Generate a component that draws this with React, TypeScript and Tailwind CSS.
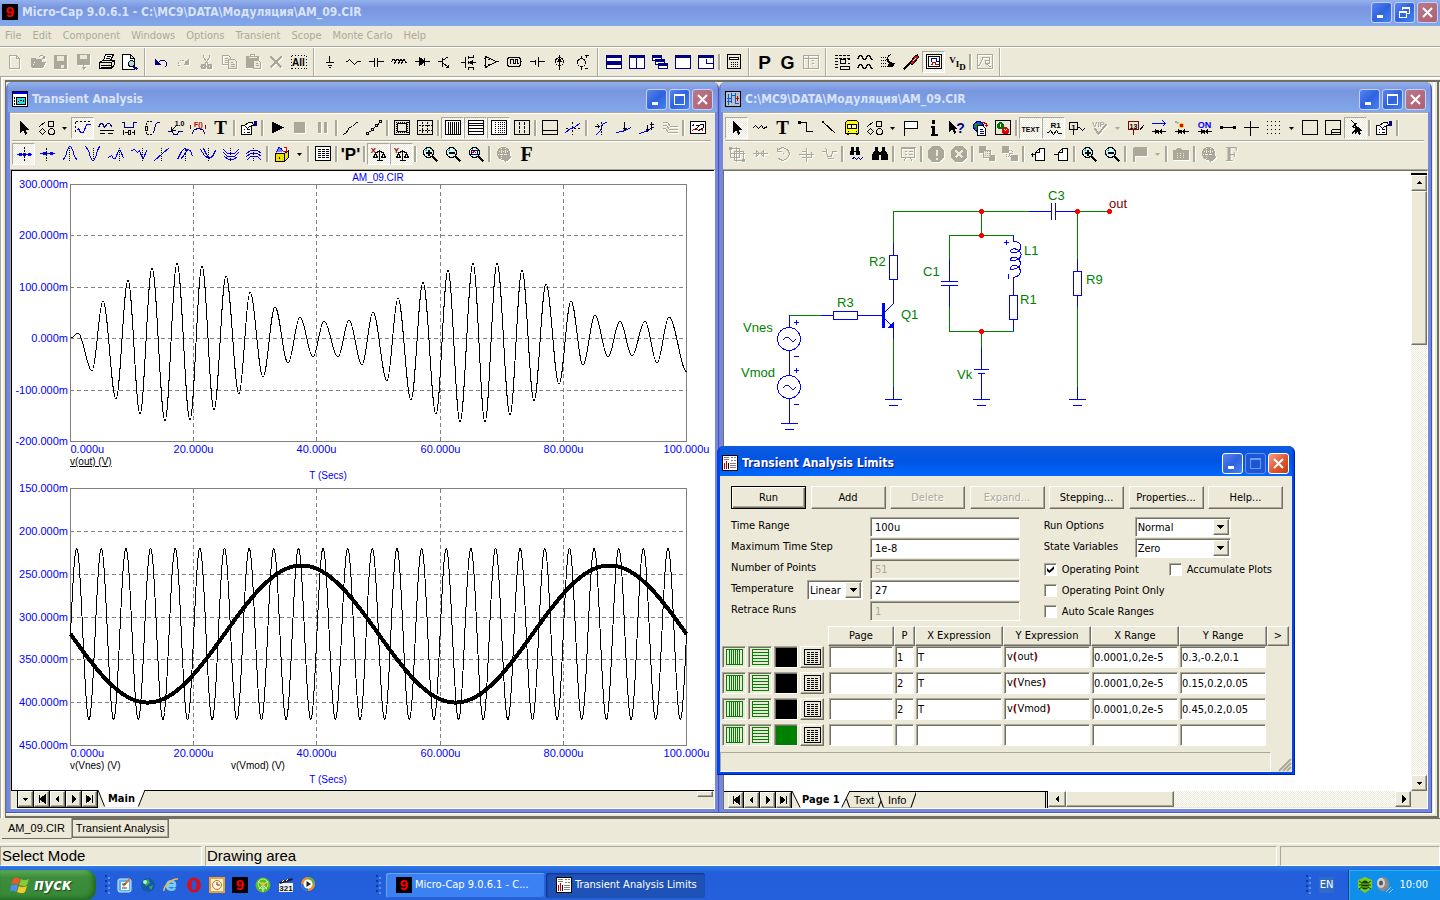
import type { ReactNode } from 'react';
import clsx from 'clsx';

const UI = 'font-["DejaVu_Sans_Condensed","Liberation_Sans",sans-serif]';
const RAISED = 'border border-t-white border-l-white border-r-[#716f64] border-b-[#716f64] shadow-[inset_-1px_-1px_#aca899] bg-[#ece9d8]';
const SUNKEN = 'border border-t-[#aca899] border-l-[#aca899] border-r-white border-b-white shadow-[inset_1px_1px_#716f64]';
const HATCH = 'bg-[repeating-conic-gradient(#ffffff_0_25%,#ece9d8_0_50%)] bg-[length:2px_2px]';

const FACE = '#ece9d8';
const BLUE = '#0000ff';
const NAVY = '#000080';

const circ = (x: number, y: number, r: number) =>
  `M${x - r} ${y}a${r} ${r} 0 1 0 ${2 * r} 0a${r} ${r} 0 1 0 ${-2 * r} 0`;

function L({ d, c = 'currentColor', f = 'none', w = 1, dash }: { d: string; c?: string; f?: string; w?: number; dash?: string }) {
  return <path d={d} stroke={c} fill={f} strokeWidth={w} strokeDasharray={dash} />;
}

function T({ x = 8, y, s, c = 'currentColor', serif, children }: { x?: number; y: number; s: number; c?: string; serif?: boolean; children: string }) {
  return (
    <text x={x} y={y} fontSize={s} fill={c} stroke="none" fontWeight="bold" textAnchor="middle" fontFamily={serif ? 'Liberation Serif, serif' : 'Liberation Sans, sans-serif'}>
      {children}
    </text>
  );
}

const shapes = <><L d="M0 6L6 1" /><L d="M9 1H14V6H9Z" /><L d="M3 8L6 11L3 14L0 11Z" /><L d={circ(12, 11, 3)} /></>;
const pageProps = <><L d="M0 5H10V14H0Z" f="#fff" /><L d="M2 9H3M5 9H8M2 12H3M5 12H8" /><L d="M3 5L7 2L11 2L12 5L8 6L6 8Z" f="#fff" /><L d="M13 1H15V5H13Z" c={NAVY} f={NAVY} /></>;
const lens = <><L d={circ(6, 6, 5)} f="#d8f4f4" /><L d="M4 3L3 5M9 3L8 4" c="#00c8d0" /><L d="M10 10L15 15" w={2} /></>;
const globe = <><L d={circ(7, 7, 6)} f="#aca899" /><L d="M2 5H12M1 8H13M5 1V13M9 1V13" c={FACE} dash="1 1" /><L d="M6 12L13 8L14 11L9 15Z" f="#aca899" /></>;
const vlines = (n: number[]) => n.map((x) => `M${x} 1V14`).join('');
const source = <><L d="M0 11H14M7 9V13" /><L d="M4 9L7 11L4 13ZM10 9L8 11L10 13Z" f="currentColor" /></>;

const icons: Record<string, ReactNode> = {
  New: <L d="M2 1H9L12 4V14H2ZM9 1V4H12" />,
  Open: <><L d="M1 4H5L6 5H11V7H4L1 12Z" f="currentColor" /><L d="M5 8H15L12 13H2Z" f="currentColor" /><L d="M8 3L10 1H12L14 4M14 1V4H11" /></>,
  Save: <><L d="M1 1H13V14H1Z" f="currentColor" /><L d="M4 2H10V6H4Z" c={FACE} f={FACE} /><L d="M8 11H10V13H8Z" c={FACE} f={FACE} /></>,
  'Save As': <><L d="M1 0H13V10H1Z" f="currentColor" /><L d="M4 1H10V4H4Z" c={FACE} f={FACE} /><L d="M7 10V15M5 13H9M6 14H8" /></>,
  Print: <><L d="M4 6L6 0H14L11 6" f="#fff" /><L d="M7 2H11M6 4H10" /><L d="M0 8L3 6H15V10L12 14H0Z" f={FACE} /><L d="M0 8H12V14M12 8L15 6M1 11H11" /><L d="M1 13H11" w={2} /><L d="M8 10H10" c="#ffe800" /></>,
  Preview: <><L d="M0 0H8L12 4V15H0ZM8 0V4H12" f="#fff" /><L d={circ(9, 9, 3)} f="#a8dce0" /><L d="M11 12L15 15" c={NAVY} w={2} /></>,
  Undo: <><L d="M2 5V10H7Z" c={NAVY} f={NAVY} /><L d="M5 8L7 6H11L13 8V11L11 13" c={NAVY} /></>,
  Redo: <><L d="M12 5V10H8Z" f="currentColor" /><L d="M10 8L8 6H4L2 8V11L4 12" dash="2 1" /></>,
  Cut: <><L d="M4 0V3L9 10M10 0V3L5 10" /><L d={circ(4, 12, 2)} w={2} /><L d={circ(10, 12, 2)} w={2} /></>,
  Copy: <><L d="M0 1H6L8 3V10H0ZM2 4H5M2 6H6M2 8H6" /><L d="M6 5H12L14 7V14H6Z" f={FACE} /><L d="M8 8H10M8 10H12M8 12H12" /></>,
  Paste: <><L d="M1 2H13V13H1Z" f="currentColor" /><L d="M5 0H9V3H5Z" /><L d="M3 3H11" c={FACE} /><L d="M8 6H13L15 8V14H8Z" f={FACE} /><L d="M10 9H12M10 11H13" /></>,
  Delete: <L d="M2 2L13 13M13 2L2 13" w={2} />,
  'Select All': <><L d="M0 1H15M0 14H15M0 1V14M15 1V14" dash="1 2" /><T x={7} y={11} s={10}>All</T></>,
  Ground: <L d="M7 1V8M3 8H11M5 11H9M6 13H8" />,
  Resistor: <L d="M0 7H2L4 5L9 10L12 7H15" />,
  Capacitor: <L d="M0 7H6M6 3V12M9 3V12M9 7H15" />,
  Inductor: <L d="M0 8L1 5H3L4 8L3 9L5 5H7L8 8L7 9L9 5H10L11 8L10 9L12 5H13L14 8H15" />,
  Diode: <><L d="M0 7H15M10 3V11" /><L d="M5 3L10 7L5 11Z" f="currentColor" /></>,
  'NPN Transistor': <L d="M0 7H5M5 3V12M5 6L11 2M5 8L11 13M11 10V13H8" />,
  'DNMOS Transistor': <><L d="M0 8H5M5 2V13M8 1V4M8 6V9M8 12V15M8 3H13V0M8 13H13V15M8 8H15" /><L d="M9 8L12 6V10Z" f="currentColor" /></>,
  Opamp: <L d="M2 2V13L13 7ZM0 4H2M0 11H2M13 7H15M4 5H6M4 10H6" />,
  'Pulse Source': <><L d="M2 3H13L14 5V10L13 12H2L1 10V5ZM0 7H1M14 7H15" /><L d="M3 9H4V5H7V9H9V5H11V9H12" /></>,
  Battery: <L d="M0 7H6M6 5V10M9 2V12M9 7H15" />,
  'Current Source': <><L d={circ(7, 7, 4)} /><L d="M7 0V15" /><L d="M5 7L7 4L9 7Z" f="currentColor" /></>,
  'Voltage Source': <><L d={circ(6, 8, 4)} /><L d="M6 1V4M6 12V15M9 1H13M11 0V3M9 14H12" /></>,
  'Tile Horizontal': <><L d="M0 1H15V7H0ZM0 8H15V14H0Z" c={NAVY} f="#fff" /><L d="M0 2H15M0 9H15" c={NAVY} w={3} /></>,
  'Tile Vertical': <><L d="M0 1H7V14H0ZM7 1H15V14H7Z" c={NAVY} f="#fff" /><L d="M0 2H15" c={NAVY} w={3} /></>,
  Cascade: <><L d="M0 1H9V6H0ZM3 5H12V10H3ZM6 9H15V14H6Z" c={NAVY} f="#fff" /><L d="M0 2H9M3 6H12M6 10H15" c={NAVY} w={3} /></>,
  Maximize: <><L d="M0 1H15V14H0Z" c={NAVY} f="#fff" /><L d="M0 2H15" c={NAVY} w={3} /></>,
  Overlap: <><L d="M0 1H15V14H0Z" c={NAVY} f="#fff" /><L d="M0 2H15" c={NAVY} w={3} /><L d="M8 4V9H15" c={NAVY} /></>,
  Calculator: <><L d="M1 0H14V14H1Z" /><L d="M3 3H12V5H3Z" f="#fff" /><L d="M4 8H12M4 10H12M4 12H12" dash="1 1" /></>,
  P: <T x={7} y={14} s={19}>P</T>,
  G: <T x={7} y={14} s={18}>G</T>,
  Panels: <L d="M0 1H15V14H0ZM0 4H15M5 1V14M8 6H10M8 9H10" />,
  Bill: <><L d="M0 1H15M0 4H15M0 7H3M0 10H3M0 13H3" dash="3 1" /><L d="M6 5H11V9H6ZM13 5H15M13 9H15M6 12H15V15H6Z" /></>,
  Waveforms: <L d="M0 5L2 1H4L6 5H8L10 1H12L14 5H15M0 14L2 10H4L6 14H8L10 10H12L14 14H15" />,
  Optimizer: <><L d="M0 3H5M0 6H5M0 9H5M0 12H5" dash="1 1" /><L d="M8 1L11 0M8 1L7 4L9 8L14 9L12 12L7 12L9 9L6 5" f="currentColor" /></>,
  Probe: <><L d="M0 15L7 8" w={2} /><L d="M6 9L11 2L14 0L15 3L9 10Z" f="#d01010" /><L d="M9 7L12 4" c="#fff" /></>,
  Scope: <><L d="M0 0H15V14H0Z" /><L d="M2 2H13V12H2Z" f="#fff" /><L d="M4 7H5V4H10V7H12" c={NAVY} /><L d="M4 10H6V8H9V10H12" c="#c00000" /></>,
  VIP: <><T x={3} y={8} s={9} serif>V</T><T x={8} y={12} s={9} serif>I</T><T x={13} y={15} s={9} serif>D</T></>,
  Thumbnail: <><L d="M0 0H15V14H0Z" /><L d="M1 12L5 5V3H12V9H8V6H11M8 9L14 13" /></>,
  Pointer: <L d="M4 1V12L7 9L9 14L10 13L9 9H12Z" f="currentColor" />,
  'Graphic Shapes': shapes,
  'Scope Cursor': <><L d="M0 1H14M0 1V13" dash="2 2" /><L d="M1 10L3 8L5 12L8 12L11 4L15 4" c={BLUE} /></>,
  Peaks: <><L d="M0 7L2 3L4 3L6 7L9 3L11 3L14 7" c={NAVY} /><L d="M1 10H15M1 13H6M9 13H14" /></>,
  'Horizontal Tag': <><L d="M0 2H3V7H12V2H15" c={NAVY} /><L d="M2 9V14M13 9V14M3 12H6M10 12H12" /><L d="M7 10H9V14H7Z" /></>,
  'Vertical Tag': <><L d="M2 1H7M2 14H7M2 2V5M2 11V13" dash="2 1" /><L d="M9 13L11 4L13 2H15" c={NAVY} /><L d="M1 6H3V10H1Z" /></>,
  'Point Tag': <><L d="M0 11H5L6 14H10L11 11H15" c={NAVY} /><L d="M4 10L9 5M4 6V10H8" /><T x={12} y={5} s={7}>1.0</T></>,
  'Performance Tag': <><L d="M0 4V8M15 4V8" c="#800000" /><L d="M1 14L4 9L8 8L12 9L15 14" c={NAVY} /><T x={8} y={6} s={7} c="#c00000">F()</T></>,
  Text: <T x={7} y={13} s={19} serif>T</T>,
  Properties: pageProps,
  Run: <L d="M3 2L13 7L3 12Z" f="currentColor" />,
  Stop: <L d="M2 2H12V12H2Z" f="currentColor" />,
  Pause: <L d="M3 2H5V12H3ZM9 2H11V12H9Z" f="currentColor" />,
  Smooth: <L d="M0 14L3 12L6 7L9 6L12 3L15 1" />,
  'Data Points': <L d="M2 12L5 10M7 8L9 6M11 5L13 2M0 12H2V14H0ZM5 8H7V10H5ZM9 4H11V6H9ZM13 0H15V2H13Z" />,
  Ruler: <><L d="M0 0H15V14H0Z" /><L d="M3 3H12V11H3Z" /><L d="M1 2H14M1 12H14M2 1V14M13 1V14" dash="1 1" /></>,
  Grid: <><L d="M0 0H15V14H0Z" /><L d="M5 1V14M10 1V14M1 5H14M1 10H14" dash="2 1" /></>,
  'X Grid': <><L d="M0 0H15V14H0Z" f="#fff" /><L d={vlines([3, 5, 7, 9, 11, 13])} /></>,
  'Y Grid': <><L d="M0 0H15V14H0Z" f="#fff" /><L d="M0 3H15M0 5H15M0 8H15M0 11H15" /></>,
  'Minor Log Grid': <><L d="M0 0H15V14H0Z" f="#fff" /><L d={vlines([4, 7, 9, 11, 13])} dash="1 1" /></>,
  'Minor Grid': <><L d="M0 0H15V14H0Z" /><L d={vlines([5, 10])} dash="3 1" /></>,
  Baseline: <L d="M0 0H15V14H0ZM0 10H15" />,
  'Horizontal Cursor': <><L d="M0 8H15M7 1V14" dash="2 2" /><L d="M0 12L5 8L9 7L15 2" c={BLUE} /></>,
  'Cursor Left': <><L d="M2 15L7 10L9 4L14 1" c={BLUE} /><L d="M1 6H6M4 4L6 6L4 8" /><L d="M8 1V14" dash="2 1" /></>,
  'Cursor Down': <><L d="M0 12L6 11L10 9L15 7" c={BLUE} /><L d="M8 1V10M6 8H10M7 9H9" /></>,
  'Cursor Both': <><L d="M0 13L6 11L10 9L15 6" c={BLUE} /><L d="M8 4V11M6 9H10M12 1V9M10 4H14" /></>,
  'Track Curves': <L d="M0 2H5L8 6H15M0 5H4L7 9H15M0 8H3L6 12H15" />,
  'Plot Scope': <><L d="M0 1H15V13H0Z" f="#fff" /><L d="M2 10L5 8L8 10L11 9L13 10" c="#d00000" /><L d="M4 10L10 4L13 4L13 7L8 10M5 5L9 5" /><L d="M2 5L4 4" c={BLUE} /></>,
  'Next Data Point': <><L d="M0 8H15" c={BLUE} /><L d="M3 7H5V9H3ZM7 7H9V9H7ZM12 7H14V9H12Z" c={BLUE} f={BLUE} /><L d="M8 0V15" dash="2 1" /></>,
  'Next Interpolated': <><L d="M0 7H15" c={BLUE} /><L d="M4 6H6V8H4ZM11 6H13V8H11Z" c={BLUE} f={BLUE} /><L d="M7 1V14" dash="2 1" /></>,
  Peak: <><L d="M0 14L3 10L5 3L7 0H8L10 3L12 10L15 14" c={BLUE} /><L d="M7 1V14" dash="1 1" /></>,
  Valley: <><L d="M0 0L3 4L5 11L7 14H8L10 11L12 4L14 0" c={BLUE} /><L d="M8 1V14" dash="1 1" /></>,
  High: <><L d="M0 11L3 9L5 12L7 12L10 4L12 4L15 12" c={BLUE} /><L d="M11 1V14" dash="1 1" /></>,
  Low: <><L d="M0 4L3 3L6 6L8 4L11 12L12 12L15 4" c={BLUE} /><L d="M11 1V14" dash="1 1" /></>,
  Inflection: <><L d="M0 14L15 1" c={BLUE} /><L d="M7 1V14" dash="1 1" /></>,
  'Global High': <><L d="M0 13L4 5L7 2L11 4M3 13L7 8L10 3L13 4L15 10" c={BLUE} /><L d="M8 1V14" dash="1 1" /></>,
  'Global Low': <><L d="M0 3L4 9L8 12L12 10M3 2L6 8L9 12L12 10L15 4" c={BLUE} /><L d="M8 1V14" dash="1 1" /></>,
  Bottom: <><L d="M0 3L4 7H11L15 3M0 6L4 10H11L15 6M1 10L5 13H10L14 10" c={BLUE} /><L d="M7 1V14" dash="1 1" /></>,
  Top: <><L d="M0 7L4 4H11L15 7M0 10L4 7H11L15 10M0 14L4 10H11L15 14" c={BLUE} /><L d="M7 1V14" dash="1 1" /></>,
  'Go To Branch': <><L d="M1 7H10L14 4V11L10 15H1Z" f="#f0e000" /><L d="M10 7V15M10 7L14 4M5 10V12" /><L d="M2 6L4 1L7 2L8 5" c={BLUE} f="#8080ff" /><L d="M9 1H12V5H8" c="#e00000" f="#fff" /></>,
  'Numeric Output': <><L d="M0 0H15V14H0Z" f="#fff" /><L d="M2 3H13M2 5H13M2 7H13M2 9H13M2 11H13" dash="3 1" /></>,
  'Probe P': <T x={7} y={13} s={17}>'P'</T>,
  'Normalize X': <><L d="M8 3V13M4 7L8 4L12 7M2 11H6L4 7ZM10 11H14L12 7ZM5 14H11" /><T x={2} y={6} s={8} c="#a00000">X</T></>,
  'Normalize Y': <><L d="M8 3V13M4 7L8 4L12 7M2 11H6L4 7ZM10 11H14L12 7ZM5 14H11" /><T x={2} y={6} s={8} c="#a00000">Y</T></>,
  'Zoom In': <>{lens}<L d="M3 6H9M6 3V9" w={2} /></>,
  'Zoom Out': <>{lens}<L d="M3 6H9" w={2} /></>,
  'Zoom Auto': <>{lens}<L d="M3 4H9V8H3Z" c={NAVY} f="#fff" /><L d="M4 6L6 5L8 7" c="#e00000" /></>,
  Color: globe,
  Font: <T x={7} y={14} s={20} serif>F</T>,
  Component: <L d="M0 8L3 5L6 8L9 5L11 8L15 6" />,
  Wire: <><L d="M2 2H8V11H14" /><L d="M0 1H2V3H0Z" f="currentColor" /></>,
  'Diagonal Wire': <><L d="M2 2L14 13" /><L d="M1 1H2V2H1Z" f="currentColor" /></>,
  Bus: <><L d="M1 2L3 0H12L14 2V13H1Z" f="#ffff00" /><L d="M3 4H12V8H3ZM7 4V8" f="#ffffc0" /><L d="M3 11H4M11 11H12M2 14H4M11 14H13" /></>,
  Flag: <L d="M1 15V1H14V8H1" f="#fff" />,
  Info: <><L d="M6 0H8V3H6Z" f="currentColor" /><L d="M4 6H8M4 14H11" w={2} /><L d="M7 6V14" w={3} /></>,
  Help: <><L d="M0 1V11L3 8L5 13L6 12L5 8H7Z" f="currentColor" /><T x={11} y={12} s={14} c={NAVY}>?</T></>,
  'Link Files': <><L d={circ(6, 6, 5)} c={NAVY} f="#2050d0" /><L d="M3 4H7V8H4Z" c="#00a000" f="#00a000" /><L d="M5 5H10L13 8V15H5Z" f="#fff" /><L d="M7 9H10M7 11H11M7 13H11" c={NAVY} /><L d="M10 2L14 3V6M12 5H15" c="#c00000" /></>,
  'Enable Regions': <><L d="M0 0H15V14H0Z" /><L d={circ(5, 5, 3)} c="#007000" f="#007000" /><L d={circ(10, 10, 3)} c="#e00000" f="#e00000" /><L d="M5 3V6M9 9L11 11M11 9L9 11" c="#fff" /></>,
  'Grid Text': <T x={7} y={11} s={7}>TEXT</T>,
  'Attribute Text': <><T x={9} y={7} s={8}>R1</T><L d="M0 12H2L4 10L7 14L10 10L12 13H15" /></>,
  'Node Numbers': <><L d="M0 2H8V9H0ZM4 9V14M8 7H10L13 10L15 8" /><T x={4} y={9} s={8}>1</T></>,
  'Node Voltages': <><T x={6} y={6} s={8}>VIP</T><L d="M2 8L6 13L14 4" w={2} /></>,
  Currents: <><L d="M0 1H10V9H0Z" c="#800000" /><L d="M5 9V14" c="#800000" /><L d="M11 10L15 5" /><T x={5} y={8} s={7}>13</T></>,
  'Current Arrows': <><L d="M0 3H14M11 0L14 3L11 6" c={BLUE} />{source}</>,
  Power: <><L d="M1 1L4 3" c="#aca899" w={2} /><L d={circ(7, 5, 2)} c="#e0d000" f="#f00000" />{source}</>,
  Condition: <><T x={7} y={7} s={9} c={BLUE}>ON</T>{source}</>,
  'Pin Connections': <><L d="M0 7H15" /><L d="M0 6H2V8H0ZM13 6H15V8H13Z" f="currentColor" /></>,
  'Cross-hair': <L d="M7 0V15M0 7H15" />,
  Dots: <L d="M0 1H16M0 5H16M0 9H16M0 13H16" dash="1 3" />,
  Border: <L d="M0 0H15V14H0Z" />,
  'Title Block': <L d="M0 0H15V14H0ZM6 9H15M6 9V14M6 12H15" />,
  'Select Region': <><L d="M3 0L6 3H8L4 6L8 8L3 14" /><L d="M7 5V13L9 11L11 14L12 13L10 10H13Z" f="currentColor" /></>,
  'Select Group': <><L d="M1 2H10V11H1ZM5 5H14V14H5ZM0 7H15M7 0V15" /><L d="M0 1H2V3H0ZM13 13H15V15H13Z" f="currentColor" /></>,
  Mirror: <L d="M0 7H15M4 4L7 7L4 10ZM11 4L8 7L11 10Z" />,
  Rotate: <><L d="M3 3L7 1L12 3L14 7L12 12L7 14L3 12" /><L d="M2 1V5H6M7 7H8" /></>,
  'Flip X': <L d="M0 8H15M8 1V15M3 5H7M3 11H13V5" />,
  'Flip Y': <L d="M0 5H5L6 10H10L11 5H15M4 2L6 5M6 12H12" />,
  'Find Component': <><L d="M2 1H4V4H2ZM7 1H9V4H7Z" f="currentColor" /><L d="M1 5H4V8H1ZM7 5H10V8H7ZM4 5H7" f="currentColor" /><L d="M3 12L5 11L7 13L9 11L11 13L13 11" c={NAVY} /></>,
  Find: <><L d="M3 1H5V4H3ZM10 1H12V4H10Z" f="currentColor" /><L d="M0 8L2 5H6V13H0ZM9 5H13L15 8V13H9ZM6 6H9V8H6Z" f="currentColor" /></>,
  Repeat: <L d="M0 1H15M1 2H14V11H1ZM4 5H6M8 5H12M4 8H6M8 8H12M5 12L3 15M10 12L12 15" />,
  'Error Mark': <><L d="M4 0H11L15 4V11L11 15H4L0 11V4Z" f="currentColor" /><L d="M8 3V9M8 11V13" c={FACE} w={2} /></>,
  'Clear Mark': <><L d="M4 0H11L15 4V11L11 15H4L0 11V4Z" f="currentColor" /><L d="M4 4L11 11M11 4L4 11" c={FACE} w={2} /></>,
  'Bring To Front': <><L d="M0 0H6V6H0ZM10 9H15V14H10Z" f="currentColor" /><L d="M4 4H11V11H4Z" f={FACE} /><L d="M5 5H10M5 7H10M5 9H10" dash="1 1" /></>,
  'Send To Back': <><L d="M0 0H6V6H0ZM9 9H15V14H9Z" f="currentColor" /><L d="M4 4H10V10H4Z" f="none" dash="1 1" /><L d="M6 7H9M7 6V9" /></>,
  'Add Page': <><L d="M9 2H14V14H5V6Z" f="#fff" /><L d="M9 2V6H5M0 8H4M2 6V10" /></>,
  'Delete Page': <><L d="M9 2H14V14H5V6Z" f="#fff" /><L d="M9 2V6H5M0 8H4" /></>,
  'Add Flag': <><L d="M1 1V15" w={2} /><L d="M2 1H14V9H2Z" f="currentColor" /></>,
  'Use Picture': <><L d="M0 4H3L4 2H7L8 4H15V13H0Z" f="currentColor" /><L d="M3 7H12M3 9H12M3 11H12" c={FACE} dash="1 2" /></>,
};

function Icon({ name }: { name: string }) {
  return (
    <svg width="16" height="16" viewBox="0 0 16 16" fill="none" shapeRendering="crispEdges" className="block shrink-0 overflow-visible">
      <g transform="translate(.5 .5)">{icons[name]}</g>
    </svg>
  );
}

// '|' small divider, '||' band divider, 'v' drop arrow, '*' pressed, '-' disabled
function Toolbar({ items }: { items: string[] }) {
  return (
    <div className="flex h-[22px] items-center">
      {items.map((item, i) => {
        if (item === '|') return <span key={i} className="mx-px h-4 w-[3px] shrink-0 border-l-2 border-l-[#aca899] border-r border-r-white" />;
        if (item === '||') return <span key={i} className="mx-[3px] h-7 w-0.5 shrink-0 border-l border-l-[#aca899] border-r border-r-white" />;
        if (item === 'v' || item === '-v')
          return (
            <button key={i} aria-label="More" className={clsx('flex h-[22px] w-[13px] shrink-0 items-center justify-center', item === '-v' ? 'text-[#aca899]' : 'text-black')}>
              <svg width="5" height="3" viewBox="0 0 5 3"><path d="M0 0H5L2.5 3Z" fill="currentColor" /></svg>
            </button>
          );
        const pressed = item[0] === '*';
        const disabled = item[0] === '-';
        const name = pressed || disabled ? item.slice(1) : item;
        return (
          <button
            key={i}
            aria-label={name}
            disabled={disabled}
            className={clsx(
              'flex h-[22px] w-[23px] shrink-0 items-center justify-center',
              disabled ? 'text-[#aca899] drop-shadow-[1px_1px_0_#fff]' : 'text-black',
              pressed && `border border-t-[#aca899] border-l-[#aca899] border-r-white border-b-white ${HATCH}`,
            )}
          >
            <Icon name={name} />
          </button>
        );
      })}
    </div>
  );
}

const mainBar = [
  '-New', '-Open', '-Save', '-Save As', 'Print', 'Preview', '||',
  'Undo', '-Redo', '-Cut', '-Copy', '-Paste', '-Delete', 'Select All', '||',
  'Ground', 'Resistor', 'Capacitor', 'Inductor', 'Diode', 'NPN Transistor', 'DNMOS Transistor', 'Opamp', 'Pulse Source', 'Battery', 'Current Source', 'Voltage Source', '||',
  'Tile Horizontal', 'Tile Vertical', 'Cascade', 'Maximize', 'Overlap', '|', 'Calculator', '||',
  'P', 'G', '-Panels', '||',
  'Bill', 'Waveforms', 'Optimizer', 'Probe', '*Scope', 'VIP', '|', '-Thumbnail', '||',
];

const plotBar1 = [
  'Pointer', 'Graphic Shapes', 'v', '*Scope Cursor', 'Peaks', 'Horizontal Tag', 'Vertical Tag', 'Point Tag', 'Performance Tag', 'Text', '|',
  'Properties', '|', 'Run', '-Stop', '-Pause', '|', 'Smooth', 'Data Points', '|', 'Ruler', 'Grid', '|',
  '*X Grid', '*Y Grid', '*Minor Log Grid', 'Minor Grid', '|', 'Baseline', 'Horizontal Cursor', '|',
  'Cursor Left', 'Cursor Down', 'Cursor Both', '-Track Curves', '|', 'Plot Scope',
];

const plotBar2 = [
  '*Next Data Point', 'Next Interpolated', 'Peak', 'Valley', 'High', 'Low', 'Inflection', 'Global High', 'Global Low', 'Bottom', 'Top', '|',
  'Go To Branch', 'v', '|', 'Numeric Output', '|', 'Probe P', '|', '*Normalize X', '*Normalize Y', '|',
  'Zoom In', 'Zoom Out', 'Zoom Auto', '|', '-Color', 'Font',
];

const schemBar1 = [
  '*Pointer', 'Component', 'Text', 'Wire', 'Diagonal Wire', 'Bus', 'Graphic Shapes', 'v', 'Flag', 'Info', 'Help', 'Link Files', 'Enable Regions', '|',
  '*Grid Text', '*Attribute Text', 'Node Numbers', '-Node Voltages', '-v', 'Currents', 'Current Arrows', 'Power', 'Condition', 'Pin Connections', 'Cross-hair', 'Dots', 'v',
  'Border', 'Title Block', '*Select Region', '|', 'Properties', '|',
];

const schemBar2 = [
  '-Select Group', '-Mirror', '-Rotate', '-Flip X', '-Flip Y', '|', 'Find Component', 'Find', '|', '-Repeat', '|', '-Error Mark', '-Clear Mark', '|',
  '-Bring To Front', '-Send To Back', '|', 'Add Page', 'Delete Page', '|', 'Zoom In', 'Zoom Out', '|', '-Add Flag', '-v', '|', '-Use Picture', '|', '-Color', '-Font',
];

const nine = (
  <>
    <rect width="16" height="16" fill="#000" />
    <text x="8" y="13" fontSize="15" fontWeight="bold" textAnchor="middle" fill="#f00" fontFamily="Liberation Sans, sans-serif">9</text>
  </>
);

function AppIcon() {
  return <svg width="16" height="16" viewBox="0 0 16 16" className="shrink-0 overflow-visible">{nine}</svg>;
}

function PlotIcon() {
  return (
    <svg width="16" height="16" viewBox="0 0 16 16" shapeRendering="crispEdges" className="shrink-0">
      <rect x=".5" y=".5" width="15" height="15" fill="#fff" stroke="#000" />
      <rect x="1" y="1" width="14" height="2" fill="#0000e0" />
      <rect x="4.5" y="6.5" width="9" height="7" fill="#30d8e0" stroke="#000" />
      <path d="M6 11L8 9H11L12 11M2.5 6V14" stroke="#000" fill="none" strokeDasharray="2 1" />
    </svg>
  );
}

function SchematicIcon() {
  return (
    <svg width="16" height="16" viewBox="0 0 16 16" shapeRendering="crispEdges" className="shrink-0">
      <rect x=".5" y=".5" width="15" height="15" fill="#b8c0c8" stroke="#000" />
      <path d="M2 7.5H6M3.5 3V14M6.5 2V12M10.5 2V12M6 4.5H11M10 12.5H14M2 10.5H6" stroke="#0060e0" fill="none" />
      <path d="M10 7.5H14M12.5 5V10" stroke="#d00000" />
    </svg>
  );
}

function LimitsIcon() {
  return (
    <svg width="16" height="16" viewBox="0 0 16 16" shapeRendering="crispEdges" className="shrink-0">
      <rect x=".5" y=".5" width="15" height="15" fill="#fff" stroke="#000" />
      <path d="M2 2.5H7M2 4.5H7M9 2.5H11M12 2.5H14M9 5.5H11M12 5.5H14M8 8.5H14M8 10.5H14M8 12.5H14" stroke="#808080" />
      <path d="M2.5 8V14M4.5 6V14" stroke="#c00000" />
      <path d="M6.5 8V14" stroke="#000" />
    </svg>
  );
}

type ButtonKind = 'Minimize' | 'Maximize' | 'Restore' | 'Close';

function TitleButton({ kind, active, dim }: { kind: ButtonKind; active?: boolean; dim?: boolean }) {
  return (
    <button
      aria-label={kind}
      disabled={dim}
      className={clsx(
        'flex size-[21px] items-center justify-center rounded-[3px] border',
        dim ? 'border-[#6a94ea]' : active ? 'border-white' : 'border-[#c3d2f6]',
        kind === 'Close'
          ? active ? 'bg-linear-to-br from-[#f0a088] via-[#e25a34] to-[#c63a10]' : 'bg-linear-to-br from-[#b8788c] to-[#b06070]'
          : dim ? 'bg-[#1c56d8]' : 'bg-linear-to-br from-[#5a84ee] via-[#2f62e0] to-[#4682f0]',
      )}
    >
      <svg width="15" height="15" viewBox="0 0 15 15" fill="none" stroke={dim ? '#6f9bf0' : '#fff'} shapeRendering="crispEdges">
        {kind === 'Minimize' && <path d="M3 11.5H9" strokeWidth="3" />}
        {kind === 'Maximize' && <path d="M2.5 2V12.5H12.5V2M2 3.5H13" strokeWidth="1" />}
        {kind === 'Maximize' && <path d="M2 3H13" strokeWidth="2" />}
        {kind === 'Restore' && <path d="M5.5 5V2.5H12.5V8.5H10M5 3.5H13M2.5 6.5H9.5V12.5H2.5ZM2 7.5H10" />}
        {kind === 'Close' && <path d="M3 3L12 12M12 3L3 12" strokeWidth="2" shapeRendering="auto" />}
      </svg>
    </button>
  );
}

function TitleBar({ icon, title, active, main }: { icon: ReactNode; title: string; active?: boolean; main?: boolean }) {
  return (
    <header
      className={clsx(
        'flex shrink-0 items-center gap-1',
        main ? 'h-[26px] px-0.5 pb-0.5' : 'h-[30px] pt-1',
        !main && (active ? 'pr-[3px] pl-0.5' : 'px-1'),
        active
          ? 'bg-linear-to-b from-[#0f5be0] via-[#0054e3] to-[#0068ff]'
          : 'bg-linear-to-b from-[#93b1ec] via-[#7995df] via-30% to-[#82a9ea]',
      )}
    >
      {icon}
      <h2 className={clsx('grow truncate text-xs font-bold', active ? 'text-white [text-shadow:1px_1px_#0a1883]' : 'text-[#d8e4f8]')}>{title}</h2>
      <div className="flex gap-0.5">
        <TitleButton kind="Minimize" active={active} />
        <TitleButton kind={main ? 'Restore' : 'Maximize'} active={active} dim={active} />
        <TitleButton kind="Close" active={active} />
      </div>
    </header>
  );
}

function MdiWindow({ icon, title, bars, children }: { icon: ReactNode; title: string; bars: string[][]; children: ReactNode }) {
  return (
    <section className="flex min-w-0 flex-1 flex-col overflow-hidden rounded-t-[7px] bg-[#7488dd] px-1 pb-1 shadow-[inset_-1px_-1px_#4f52b5,inset_1px_1px_#6f80d8]">
      <div className="-mx-0.5 flex flex-col">
        <TitleBar icon={icon} title={title} />
      </div>
      <div className="flex min-h-0 flex-1 flex-col border-t border-t-[#aca899] bg-[#ece9d8]">
        <div className="border-t border-b border-t-white border-b-[#aca899] pt-[3px] pr-1 pb-1 pl-0.5">
          <Toolbar items={bars[0]} />
          <div className="my-px border-t border-b border-t-[#aca899] border-b-white" />
          <Toolbar items={bars[1]} />
        </div>
        {children}
      </div>
    </section>
  );
}

const outPoints: [number, number][] = [
  [59, 167], [66, 162], [80, 200], [91, 130], [104, 228], [116, 109], [128, 243], [140, 97], [153, 250], [165, 92],
  [178, 249], [190, 95], [202, 239], [214, 105], [227, 223], [238, 121], [251, 206], [263, 136], [276, 192], [288, 146],
  [301, 186], [312, 150], [326, 186], [337, 149], [350, 194], [361, 141], [375, 210], [386, 127], [399, 229], [411, 111],
  [424, 243], [436, 99], [448, 251], [461, 92], [473, 251], [485, 92], [498, 244], [510, 99], [522, 230], [534, 113],
  [547, 213], [559, 130], [571, 194], [583, 144], [596, 186], [608, 150], [620, 185], [633, 150], [645, 192], [657, 146], [675, 201],
];

function easedPath(points: [number, number][]) {
  let d = `M${points[0][0]} ${points[0][1]}`;
  for (let i = 1; i < points.length; i++) {
    const [x0, y0] = points[i - 1];
    const [x1, y1] = points[i];
    const k = (x1 - x0) * 0.364;
    d += `C${x0 + k} ${y0} ${x1 - k} ${y1} ${x1} ${y1}`;
  }
  return d;
}

function sinePath(mid: number, amp: number, periods: number) {
  let d = '';
  for (let x = 0; x <= 1232; x++) {
    const y = mid - amp * Math.sin((x / 1232) * periods * 2 * Math.PI);
    d += `${x ? 'L' : 'M'}${58.5 + x / 2} ${y.toFixed(1)}`;
  }
  return d;
}

const xTicks = [58.5, 181.5, 304.5, 428.5, 551.5, 674.5];
const xNames = ['0.000u', '20.000u', '40.000u', '60.000u', '80.000u', '100.000u'];

function Axes({ top, bottom, rows, names }: { top: number; bottom: number; rows: number[]; names: string[] }) {
  return (
    <g>
      <path d={xTicks.slice(1, 5).map((x) => `M${x} ${top}V${bottom}`).join('') + rows.slice(1, -1).map((y) => `M58 ${y}H675`).join('')} stroke="#808080" strokeDasharray="4 3" />
      <path d={`M58.5 ${top}H674.5V${bottom}H58.5Z`} stroke="#808080" />
      <g fill={BLUE} stroke="none" fontSize="11">
        {rows.map((y, i) => <text key={y} x="56" y={y + 3.5} textAnchor="end">{names[i]}</text>)}
        {xTicks.map((x, i) => <text key={x} x={x} y={bottom + 11} textAnchor={i === 0 ? 'start' : 'middle'}>{xNames[i]}</text>)}
        <text x="316" y={bottom + 37} fontSize="10" textAnchor="middle">T (Secs)</text>
      </g>
    </g>
  );
}

function Plots() {
  return (
    <svg viewBox="0 0 702 619" preserveAspectRatio="xMinYMin meet" className="block min-h-0 w-full flex-1 bg-white" fill="none" shapeRendering="crispEdges" fontFamily="Liberation Sans, sans-serif">
      <text x="366" y="10" fontSize="10" fill={BLUE} textAnchor="middle">AM_09.CIR</text>
      <Axes top={13.5} bottom={270.5} rows={[13.5, 64.5, 116.5, 167.5, 219.5, 270.5]} names={['300.000m', '200.000m', '100.000m', '0.000m', '-100.000m', '-200.000m']} />
      <path d={easedPath(outPoints)} stroke="#000" />
      <text x="58" y="294" fontSize="10" fill="#000" textDecoration="underline">v(out) (V)</text>
      <Axes top={317.5} bottom={574.5} rows={[317.5, 360.5, 403.5, 446.5, 488.5, 531.5, 574.5]} names={['150.000m', '200.000m', '250.000m', '300.000m', '350.000m', '400.000m', '450.000m']} />
      <path d={sinePath(463, 85.5, 25)} stroke="#000" />
      <path d={sinePath(463, -68.5, 2)} stroke="#000" strokeWidth="4" />
      <text x="58" y="598" fontSize="10" fill="#000">v(Vnes) (V)</text>
      <text x="219" y="598" fontSize="10" fill="#000">v(Vmod) (V)</text>
    </svg>
  );
}

const labels: [string, number, number][] = [
  ['C3', 323, 29], ['R2', 144, 95], ['C1', 198, 105], ['L1', 299, 84], ['R1', 295, 133], ['R9', 361, 113],
  ['R3', 112, 136], ['Q1', 176, 148], ['Vnes', 18, 161], ['Vmod', 16, 206], ['Vk', 232, 208],
];

const ground = (x: number, y: number) => `M${x - 8.5} ${y}H${x + 8.5}M${x - 4.5} ${y + 6}H${x + 4.5}`;

function Schematic() {
  return (
    <svg className="block h-full w-full bg-white" fill="none" stroke={BLUE} shapeRendering="crispEdges" fontFamily="Liberation Sans, sans-serif">
      <g transform="translate(1 0)">
        <path
          stroke="#008000"
          d="M168.5 72V40.5H304M352 40.5H384M256.5 40V64.5M224.5 88V64.5H288.5M224.5 136V160.5H288.5M256.5 160V176M352.5 40V88M352.5 136V216M168.5 168V216M64.5 144.5H96"
        />
        <path d="M304 40.5H326.5M326.5 32V49M330.5 32V49M330.5 40.5H352" />
        <path d="M224.5 88V110.5M216 110.5H233M216 114.5H233M224.5 114.5V136" />
        <path d="M288.5 64V70.5C293 70.5 296 73 296 76S291 83 287 81.500S288 76 293 79S297 88 289 89.500S287 84 292 87S297 96 289 98S287 92 292 95S297 105 288.500 106.500V124.5M284.5 124.5H292.5V148.5H284.5ZM288.5 148.5V160" />
        <path d="M279 71.5H284M281.5 69V74M283.5 103V108" />
        <path d="M256.5 176V198.5M249 198.5H264M253 202.5H260M256.5 202.5V228.5" />
        <path d="M168.5 72V84.5M164.5 84.5H172.5V108.5H164.5ZM168.5 108.5V132.5L160 141M160 148L168.5 156.5V168" />
        <path d="M168 152V156H164Z" fill={BLUE} />
        <path d="M158.5 132V157" strokeWidth="3" />
        <path d="M96 144.5H108.5M108.5 140.5H132.5V148.5H108.5ZM132.5 144.5H158" />
        <path d="M352.5 88V100.5M348.5 100.5H356.5V124.5H348.5ZM352.5 124.5V136M352.5 216V228.5M168.5 216V228.5" />
        <path d="M64.5 144V156.500M64.5 179.5V204.5M64.5 227.5V252.5" />
        <path d={circ(64, 168, 11.5) + circ(64, 216, 11.5)} />
        <path d="M58 169L61 166H63L67 170H69L71 168M58 217L61 214H63L67 218H69L71 216" />
        <path d="M69 151.5H74M71.500 149V154M69 185.500H74M69 199.500H74M71.500 197V202M69 233.500H74" />
        <path d={ground(168.5, 228.5) + ground(256.5, 228.5) + ground(352.5, 228.5) + ground(64.5, 252.5)} />
        <path d={[[256.5, 40.5], [352.5, 40.5], [384.5, 40.5], [256.5, 64.5], [256.5, 160.5]].map(([x, y]) => circ(x, y, 2)).join('')} fill="#f00" stroke="#f00" />
        <g fill="#008000" stroke="none" fontSize="13">
          {labels.map(([t, x, y]) => <text key={t} x={x} y={y}>{t}</text>)}
          <text x="384" y="37" fill="#800000">out</text>
        </g>
      </g>
    </svg>
  );
}

const glyphs = {
  first: 'M3 1V9M9 1V9L4 5Z',
  prev: 'M7 1V9L3 5Z',
  next: 'M4 1V9L8 5Z',
  last: 'M8 1V9M2 1V9L7 5Z',
  down: 'M2 4H8L5 7Z',
  up: 'M2 6H8L5 3Z',
};

function ArrowButton({ glyph, label, className }: { glyph: keyof typeof glyphs; label: string; className?: string }) {
  return (
    <button aria-label={label} className={clsx('flex shrink-0 items-center justify-center', RAISED, className)}>
      <svg width="11" height="10" viewBox="0 0 11 10" shapeRendering="crispEdges">
        <path d={glyphs[glyph]} fill="#000" stroke={glyph === 'first' || glyph === 'last' ? '#000' : 'none'} />
      </svg>
    </button>
  );
}

function SheetNav() {
  return (
    <>
      {(['first', 'prev', 'next', 'last'] as const).map((g) => (
        <span key={g} className="border-r border-b border-black">
          <ArrowButton glyph={g} label={`${g} page`} className="h-4 w-[15px]" />
        </span>
      ))}
    </>
  );
}

function SheetTab({ label, active }: { label: string; active?: boolean }) {
  return (
    <button className={clsx('relative -mr-1.5 h-4 shrink-0 px-2.5 text-[11px] leading-4', active ? 'z-10 -mt-px h-[17px] font-bold' : 'font-["Liberation_Sans",sans-serif]')}>
      <svg className="absolute inset-0 h-full w-full" viewBox="0 0 50 16" preserveAspectRatio="none" fill={active ? '#fff' : FACE} stroke="#000">
        <path d="M0 0L7 15.500H43L50 0" vectorEffect="non-scaling-stroke" stroke={active ? '#fff' : '#aca899'} />
        <path d="M0 0L7 15.500M43 15.500L50 0" vectorEffect="non-scaling-stroke" />
      </svg>
      <span className="relative">{label}</span>
    </button>
  );
}

function Button({ children, disabled, primary }: { children: string; disabled?: boolean; primary?: boolean }) {
  return (
    <button
      disabled={disabled}
      className={clsx('h-[23px] w-[75px]', primary ? 'border border-black bg-[#ece9d8] shadow-[inset_1px_1px_#fff,inset_-1px_-1px_#716f64,inset_-2px_-2px_#aca899]' : RAISED, disabled && 'text-[#aca899] [text-shadow:1px_1px_#fff]')}
    >
      {children}
    </button>
  );
}

function Select({ id, value, className, label }: { id: string; value: string; className: string; label?: string }) {
  return (
    <div className={clsx('relative h-5 bg-white', SUNKEN, className)}>
      <select id={id} aria-label={label} className="h-full w-full appearance-none bg-transparent pt-px pl-0.5 outline-none">
        <option>{value}</option>
      </select>
      <span className={clsx('pointer-events-none absolute top-px right-px bottom-px flex w-4 items-center justify-center', RAISED)}>
        <svg width="7" height="4" viewBox="0 0 7 4" shapeRendering="crispEdges"><path d="M0 0H7L3.500 4Z" /></svg>
      </span>
    </div>
  );
}

function Check({ label, checked }: { label: string; checked?: boolean }) {
  return (
    <label className="relative flex items-center gap-[5px]">
      <input type="checkbox" defaultChecked={checked} className={clsx('peer size-[13px] appearance-none bg-white', SUNKEN)} />
      <svg width="7" height="7" viewBox="0 0 7 7" className="pointer-events-none absolute left-[3px] hidden peer-checked:block"><path d="M0 2V5L2.500 7L7 3V0L2.500 4.500Z" /></svg>
      {label}
    </label>
  );
}

const fields = [
  { label: 'Time Range', value: '100u' },
  { label: 'Maximum Time Step', value: '1e-8' },
  { label: 'Number of Points', value: '51', disabled: true },
  { label: 'Temperature', value: '27', mode: 'Linear' },
  { label: 'Retrace Runs', value: '1', disabled: true },
];

const curves = [
  { page: '', p: '1', x: 'T', y: ['v', 'out'], xr: '0.0001,0,2e-5', yr: '0.3,-0.2,0.1', color: 'bg-black' },
  { page: '', p: '2', x: 'T', y: ['v', 'Vnes'], xr: '0.0001,0,2e-5', yr: '0.15,0.2,0.05', color: 'bg-black' },
  { page: '', p: '2', x: 'T', y: ['v', 'Vmod'], xr: '0.0001,0,2e-5', yr: '0.45,0.2,0.05', color: 'bg-black' },
  { page: '', p: '', x: '', y: null, xr: '', yr: '', color: 'bg-[#008000]' },
];

function Cell({ value, label }: { value: string; label: string }) {
  return <input aria-label={label} defaultValue={value} className={clsx('block h-[22px] w-full bg-white px-px', SUNKEN)} />;
}

function ExpressionCell({ expr }: { expr: string[] | null }) {
  return (
    <div className="relative">
      <input aria-label="Y Expression" defaultValue={expr ? `${expr[0]}(${expr[1]})` : ''} className={clsx('block h-[22px] w-full bg-white px-px text-transparent caret-black', SUNKEN)} />
      {expr && (
        <span aria-hidden className="pointer-events-none absolute inset-y-0 left-[3px] flex items-center">
          {expr[0]}<b className="text-[#800000]">(</b>{expr[1]}<b className="text-[#800000]">)</b>
        </span>
      )}
    </div>
  );
}

function CurveButton({ label, children, raised, className }: { label: string; children?: ReactNode; raised?: boolean; className?: string }) {
  return <button aria-label={label} className={clsx('flex h-[22px] w-6 items-center justify-center', raised ? RAISED : SUNKEN, className)}>{children}</button>;
}

function LimitsDialog() {
  return (
    <section role="dialog" aria-label="Transient Analysis Limits" className="absolute top-[369px] left-[717px] w-[578px] overflow-hidden rounded-t-[7px] bg-[#0048e8] px-[3px] pb-[3px] text-[11px] leading-4 shadow-[inset_-1px_-1px_#001ea0,inset_1px_1px_#0a3ed0]">
      <TitleBar icon={<LimitsIcon />} title="Transient Analysis Limits" active />
      <div className="bg-[#ece9d8] pt-2.5">
        <div className="flex justify-between pr-[9px] pl-[11px]">
          <Button primary>Run</Button>
          <Button>Add</Button>
          <Button disabled>Delete</Button>
          <Button disabled>Expand...</Button>
          <Button>Stepping...</Button>
          <Button>Properties...</Button>
          <Button>Help...</Button>
        </div>

        <div className="flex justify-between pt-2 pr-5 pl-[11px]">
          <div>
            {fields.map((f) => (
              <div key={f.label} className="flex h-[21px] items-start">
                <label htmlFor={f.label} className={clsx('leading-[18px]', f.mode ? 'w-[76px]' : 'w-[139px]')}>{f.label}</label>
                {f.mode && <Select id="temperature-mode" label="Temperature mode" value={f.mode} className="mr-[7px] w-14" />}
                <input id={f.label} defaultValue={f.value} disabled={f.disabled} className={clsx('h-5 w-[150px] px-1', SUNKEN, f.disabled ? 'bg-[#ece9d8] text-[#aca899]' : 'bg-white')} />
              </div>
            ))}
          </div>
          <div>
            <div className="flex h-[21px] items-start">
              <label htmlFor="run-options" className="w-[91px] leading-[18px]">Run Options</label>
              <Select id="run-options" value="Normal" className="w-24" />
            </div>
            <div className="flex h-[21px] items-start">
              <label htmlFor="state-variables" className="w-[91px] leading-[18px]">State Variables</label>
              <Select id="state-variables" value="Zero" className="w-24" />
            </div>
            <div className="flex h-[21px] items-center">
              <div className="w-[125px]"><Check label="Operating Point" checked /></div>
              <Check label="Accumulate Plots" />
            </div>
            <div className="flex h-[21px] items-center"><Check label="Operating Point Only" /></div>
            <div className="flex h-[21px] items-center"><Check label="Auto Scale Ranges" /></div>
          </div>
        </div>

        <table className="mt-1 ml-0.5 w-[567px] table-fixed border-collapse">
          <colgroup>
            <col className="w-[26px]" /><col className="w-[26px]" /><col className="w-[26px]" /><col className="w-7" />
            <col className="w-[66px]" /><col className="w-[21px]" /><col className="w-[88px]" /><col className="w-[88px]" /><col className="w-[88px]" /><col className="w-[88px]" /><col />
          </colgroup>
          <thead>
            <tr>
              <td colSpan={4} />
              {['Page', 'P', 'X Expression', 'Y Expression', 'X Range', 'Y Range', '>'].map((h) => (
                <th key={h} className="p-0 font-normal"><div className={clsx('h-5 leading-[18px]', RAISED)}>{h}</div></th>
              ))}
            </tr>
          </thead>
          <tbody>
            {curves.map((c, i) => (
              <tr key={i} className="h-[26px] align-top">
                <td className="p-0">
                  <CurveButton label="X log/linear"><svg width="17" height="16" shapeRendering="crispEdges" stroke="#008000" fill="none"><path d="M.5.5H16.500V15.500H.5ZM3.500 1V15M5.500 1V15M7.500 1V15M9.500 1V15M11.500 1V15M13.500 1V15" /></svg></CurveButton>
                </td>
                <td className="p-0">
                  <CurveButton label="Y log/linear"><svg width="17" height="16" shapeRendering="crispEdges" stroke="#008000" fill="none"><path d="M.5.5H16.500V15.500H.5ZM1 3.500H16M1 6.500H16M1 9.500H16M1 12.500H16" /></svg></CurveButton>
                </td>
                <td className="p-0"><CurveButton label="Color" className={c.color} /></td>
                <td className="p-0">
                  <CurveButton label="Numeric output" raised>
                    <svg width="17" height="16" shapeRendering="crispEdges" stroke="#000" fill="none"><path d="M.5.5H16.500V15.500H.5Z" /><path d="M3 3.500H15M3 5.500H15M3 7.500H15M3 9.500H15M3 11.500H15M3 13.500H15" strokeDasharray="3 1" /></svg>
                  </CurveButton>
                </td>
                <td className="px-px py-0"><Cell label="Page" value={c.page} /></td>
                <td className="px-px py-0"><Cell label="P" value={c.p} /></td>
                <td className="px-px py-0"><Cell label="X Expression" value={c.x} /></td>
                <td className="px-px py-0"><ExpressionCell expr={c.y} /></td>
                <td className="px-px py-0"><Cell label="X Range" value={c.xr} /></td>
                <td className="px-px py-0"><Cell label="Y Range" value={c.yr} /></td>
                <td />
              </tr>
            ))}
          </tbody>
        </table>

        <div className="mt-0.5 flex justify-between">
          <div className="h-5 w-[551px] border border-[#aca899] border-r-white border-b-white" />
          <svg width="14" height="20" className="self-end"><path d="M1 19L13 7M5 19L13 11M9 19L13 15" stroke="#aca899" strokeWidth="2" /></svg>
        </div>
      </div>
    </section>
  );
}

function Dots() {
  return <span className="h-5 w-[5px] shrink-0 bg-[radial-gradient(circle_at_1px_1px,#0c3a9c_1px,transparent_1px),radial-gradient(circle_at_4px_3px,#5a94f4_1px,transparent_1px)] bg-[length:5px_5px]" />;
}

const quickLaunch: [string, ReactNode][] = [
  ['Show Desktop', <><rect x="1" y="2" width="13" height="13" rx="2" fill="#5ab0f0" stroke="#d8f0ff" /><rect x="4" y="5" width="8" height="8" fill="#fff" /><path d="M6 9L13 2" stroke="#e07818" strokeWidth="2" /><path d="M5 7H9M5 11H10" stroke="#246" /></>],
  ['Globe', <><circle cx="8" cy="8" r="7" fill="#1858a8" /><path d="M3 5L8 2L10 6L6 9ZM9 10L13 8L11 13Z" fill="#38b048" /><circle cx="5" cy="5" r="2" fill="#b8e8d8" /></>],
  ['Internet Explorer', <><path d="M13 9H4C4 13 10 14 12 11M4 8C5 3 12 3 12 8Z" fill="none" stroke="#78ccff" strokeWidth="2.500" /><path d="M1 14C0 10 9 1 15 2" fill="none" stroke="#f0c030" strokeWidth="1.500" /></>],
  ['Opera', <><ellipse cx="8" cy="8" rx="7" ry="7.500" fill="#d80f18" /><ellipse cx="8" cy="8" rx="2.500" ry="5" fill="#2458d8" /></>],
  ['Outlook', <><rect x="0" y="0" width="16" height="16" fill="#f0a030" /><rect x="2" y="2" width="12" height="12" fill="#fff4dc" /><circle cx="8" cy="8" r="4.500" fill="none" stroke="#c07010" /><path d="M8 5V8H11" stroke="#604010" fill="none" /></>],
  ['Micro-Cap', nine],
  ['ICQ', <><circle cx="8" cy="8" r="7.500" fill="#58b828" /><path d="M8 8V15M3 4L8 8L13 4M4 12L8 8L12 12" stroke="#e8ffd0" fill="none" /><circle cx="8" cy="7" r="5" fill="none" stroke="#c8f0a0" /><circle cx="8" cy="7" r="2" fill="#f0c020" /></>],
  ['Media Player Classic', <><rect x="1" y="6" width="14" height="9" fill="#f4f4f4" /><path d="M1 5L14 1L15 3L2 7Z" fill="#222" /><path d="M4 5L6 3M8 4L10 2" stroke="#fff" /><text x="8" y="14" fontSize="8" fontWeight="bold" textAnchor="middle" fill="#111" fontFamily="Liberation Sans, sans-serif">321</text></>],
  ['Windows Media Player', <><circle cx="7" cy="7" r="7" fill="#f09020" /><path d="M7 0A7 7 0 0 1 14 7H7Z" fill="#60b040" /><path d="M0 7A7 7 0 0 0 7 14V7Z" fill="#3070d8" /><circle cx="7" cy="7" r="4.500" fill="#fff" /><path d="M5.500 4L10 7L5.500 10Z" fill="#222" /></>],
];

function Taskbar() {
  return (
    <footer className="flex h-[34px] shrink-0 items-end bg-linear-to-b from-[#2f7be6] via-[#245edb] via-20% to-[#2460dc] text-[11px] text-white">
      <button className="flex h-[30px] w-24 items-center gap-1 rounded-r-[10px] bg-linear-to-b from-[#5eac56] via-[#3c8c3c] via-25% to-[#388a36] pl-2.5 shadow-[inset_-3px_-2px_4px_#1f6a20] [text-shadow:1px_1px_1px_#1a4a1a]">
        <svg width="20" height="20" viewBox="0 0 20 20" className="shrink-0">
          <path d="M3 4C5 2 7 2 10 4L8 10C6 8 4 8 1 10Z" fill="#f0562a" />
          <path d="M11 4C14 6 16 5 19 4L17 10C14 12 12 11 9 10Z" fill="#8cc838" />
          <path d="M1 11C4 9 6 9 8 11L6 17C4 15 2 15 0 17Z" fill="#4a90f0" />
          <path d="M9 11C12 13 14 12 17 11L15 17C12 19 10 18 7 17Z" fill="#fcc828" />
        </svg>
        <span className="text-[16px] leading-5 font-bold italic">пуск</span>
      </button>
      <nav className="flex h-[30px] items-center pl-[9px]">
        <Dots />
        <ul className="flex items-center gap-[7px] pl-[7px]">
          {quickLaunch.map(([name, art]) => (
            <li key={name}><button aria-label={name} className="block"><svg width="16" height="16" viewBox="0 0 16 16">{art}</svg></button></li>
          ))}
        </ul>
      </nav>
      <div className="flex h-[30px] grow items-center gap-px pl-[59px]">
        <Dots />
        <button className="ml-1 flex h-[25px] w-[159px] items-center gap-[3px] rounded-[3px] bg-[#3c81f3] pl-2.5 shadow-[inset_1px_1px_#6aa4f8,inset_-1px_-1px_#2a62d0]"><AppIcon />Micro-Cap 9.0.6.1 - C...</button>
        <button className="flex h-[25px] w-[159px] items-center gap-[3px] rounded-[3px] bg-[#1e52b7] pl-2.5 shadow-[inset_1px_1px_2px_#0e3080]"><LimitsIcon />Transient Analysis Limits</button>
      </div>
      <div className="flex h-[30px] items-center gap-2 pr-3.5">
        <Dots />
        <span className="bg-[#316ac5] px-px leading-4">EN</span>
      </div>
      <div className="flex h-[30px] items-center gap-0.5 border-l border-l-[#0a3c8c] bg-[#0f8fe9] pr-3 pl-2 shadow-[inset_1px_1px_#18b8f4]">
        <svg width="16" height="16" viewBox="0 0 16 16"><path d="M8 0L15 3V11L8 16L1 11V3Z" fill="#7cd018" /><ellipse cx="8" cy="8" rx="3.500" ry="4.500" fill="#143c08" /><path d="M2 4L14 12M14 4L2 12M2 8H14" stroke="#143c08" /><path d="M5 7H11M5 10H11" stroke="#7cd018" /></svg>
        <svg width="18" height="16" viewBox="0 0 18 16"><ellipse cx="8" cy="7" rx="6" ry="7" fill="#8a8a8a" /><ellipse cx="6" cy="6" rx="4" ry="5" fill="#d0d0d0" /><ellipse cx="6" cy="6" rx="2" ry="2.500" fill="#555" /><path d="M11 15L16 10M14 16L18 12" stroke="#a0c8ff" /></svg>
        <time className="pl-1">10:00</time>
      </div>
    </footer>
  );
}

export default function App() {
  return (
    <div className={clsx('flex h-screen w-full flex-col overflow-hidden bg-[#ece9d8] text-[11px] text-black', UI)}>
      <TitleBar main icon={<AppIcon />} title="Micro-Cap 9.0.6.1 - C:\MC9\DATA\Модуляция\AM_09.CIR" />
      <nav className="flex h-5 shrink-0 items-center gap-[11px] pl-[5px] text-[#aca899]">
        {['File', 'Edit', 'Component', 'Windows', 'Options', 'Transient', 'Scope', 'Monte Carlo', 'Help'].map((m) => (
          <button key={m} disabled className="leading-4">{m}</button>
        ))}
      </nav>
      <div className="flex h-[31px] shrink-0 items-center border-t border-b border-[#aca899] pl-[3px] shadow-[inset_0_1px_#fff]">
        <Toolbar items={mainBar} />
      </div>

      <main className="relative flex min-h-0 flex-1 pt-[5px] pr-2 pb-[5px] pl-1.5 shadow-[inset_1px_0_#aca899,inset_3px_2px_#fff,inset_5px_3px_#ece9d8,inset_6px_5px_#716f64,inset_-1px_0_#ece9d8,inset_-3px_-2px_#716f64,inset_-5px_-4px_#ece9d8,inset_-7px_-5px_#fff]">
        <MdiWindow icon={<PlotIcon />} title="Transient Analysis" bars={[plotBar1, plotBar2]}>
          <div className="flex min-h-0 flex-1 flex-col border-r border-l border-l-[#aca899] border-r-white">
            <div className="flex min-h-0 flex-1 border-t border-l border-black">
              <Plots />
            </div>
            <div className="flex h-[19px] shrink-0 items-start border-t border-b border-t-black border-b-white pl-1.5">
              <span className="border-x border-b border-black"><ArrowButton glyph="down" label="page list" className="h-4 w-[15px]" /></span>
              <SheetNav />
              <SheetTab label="Main" active />
              <span className={clsx('mr-px ml-auto h-1.5 w-4', RAISED)} />
            </div>
          </div>
        </MdiWindow>

        <MdiWindow icon={<SchematicIcon />} title="C:\MC9\DATA\Модуляция\AM_09.CIR" bars={[schemBar1, schemBar2]}>
          <div className="flex min-h-0 flex-1 flex-col border-t border-r border-l border-t-[#716f64] border-l-[#716f64] border-r-white">
            <div className="flex min-h-0 flex-1">
              <div className="min-w-0 flex-1"><Schematic /></div>
              <div className={clsx('flex w-4 flex-col', HATCH)}>
                <div className="h-1 border-b-2 border-black bg-[#ece9d8]" />
                <ArrowButton glyph="up" label="Scroll up" className="h-4" />
                <div className={clsx('h-[154px]', RAISED)} />
                <ArrowButton glyph="down" label="Scroll down" className="mt-auto h-4" />
              </div>
            </div>
            <div className="flex h-[18px] shrink-0 items-start border-b border-b-white">
              <div className="flex h-[17px] min-w-0 flex-[316] border-t border-r-[3px] border-black pl-1 [border-right-style:double]">
                <SheetNav />
                <SheetTab label="Page 1" active />
                <SheetTab label="Text" />
                <SheetTab label="Info" />
              </div>
              <div className={clsx('flex h-4 min-w-0 flex-[361]', HATCH)}>
                <ArrowButton glyph="prev" label="Scroll left" className="w-[18px]" />
                <div className={clsx('w-[108px]', RAISED)} />
                <ArrowButton glyph="next" label="Scroll right" className="ml-auto w-4" />
              </div>
              <div className="w-4 self-stretch" />
            </div>
          </div>
        </MdiWindow>

        <LimitsDialog />
      </main>

      <div className="flex h-[26px] shrink-0 items-start border-b border-b-white pl-0.5 font-['Liberation_Sans',sans-serif]">
        <button className="h-[21px] border-r border-b border-r-[#aca899] border-b-[#716f64] px-1.5">AM_09.CIR</button>
        <button className="h-5 border border-t-2 border-[#716f64] px-[3px] shadow-[inset_-1px_-1px_#aca899]">Transient Analysis</button>
        <div className="grow border-t border-t-[#716f64]" />
      </div>
      <div className="flex h-[22px] shrink-0 gap-[3px] pt-0.5 font-['Liberation_Sans',sans-serif] text-[15px] leading-[18px]">
        <div className="w-[202px] border border-[#aca899] border-r-white border-b-white px-px">Select Mode</div>
        <div className="grow border border-[#aca899] border-r-white border-b-white px-px">Drawing area</div>
        <div className="w-40 border border-[#aca899] border-r-white border-b-white" />
      </div>
      <Taskbar />
    </div>
  );
}
